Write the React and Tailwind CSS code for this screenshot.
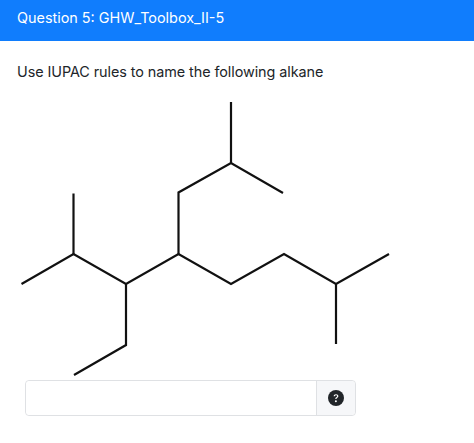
const BONDS = [
  '21.5,284 73.5,254 126,284 178.5,254 231,284 284,254 336,284 389,254',
  '73.5,193.5 73.5,254',
  '126,284 126,345 74,375',
  '178.5,254 178.5,192.5 231,163 283,193',
  '231,102 231,163',
  '336,284 336,344',
]

export default function App() {
  return (
    <div className="min-h-[443px] bg-white font-['Inter',sans-serif] text-[14.4px] text-[#212529]">
      <div className="flex h-[41px] items-center bg-[#107dfd] px-[17px] pb-[6px] text-white">
        Question 5: GHW_Toolbox_II-5
      </div>

      <p className="mt-[19px] px-[17px] leading-[24px] tracking-[-0.07px]">
        Use IUPAC rules to name the following alkane
      </p>

      {/* Skeletal formula */}
      <svg width="474" height="285" viewBox="0 95 474 285" className="mt-[11px] block">
        {BONDS.map((points) => (
          <polyline key={points} points={points} fill="none" stroke="#111" strokeWidth="2.2" strokeLinejoin="miter" />
        ))}
      </svg>

      <div className="ml-[25px] flex h-[36px] w-[331px] rounded border border-[#dfe1e4]">
        <input className="min-w-0 flex-1 rounded-l bg-white outline-none" />
        <div className="flex w-[39px] items-center justify-center rounded-r border-l border-[#dfe1e4] bg-[#f6f7f9]">
          <svg width="16" height="16" viewBox="0 0 16 16">
            <circle cx="8" cy="8" r="8" fill="#212529" />
            <path d="M5.6 6.2C5.7 4.9 6.7 4.2 8 4.2c1.4 0 2.4.8 2.4 1.9 0 .9-.5 1.3-1.1 1.7-.6.4-.8.7-.8 1.3H7.3c0-1 .3-1.5 1-1.9.5-.3.8-.6.8-1 0-.5-.4-.9-1.1-.9-.7 0-1.1.4-1.2 1z" fill="#fff" />
            <circle cx="7.9" cy="11.3" r="1" fill="#fff" />
          </svg>
        </div>
      </div>
    </div>
  )
}
